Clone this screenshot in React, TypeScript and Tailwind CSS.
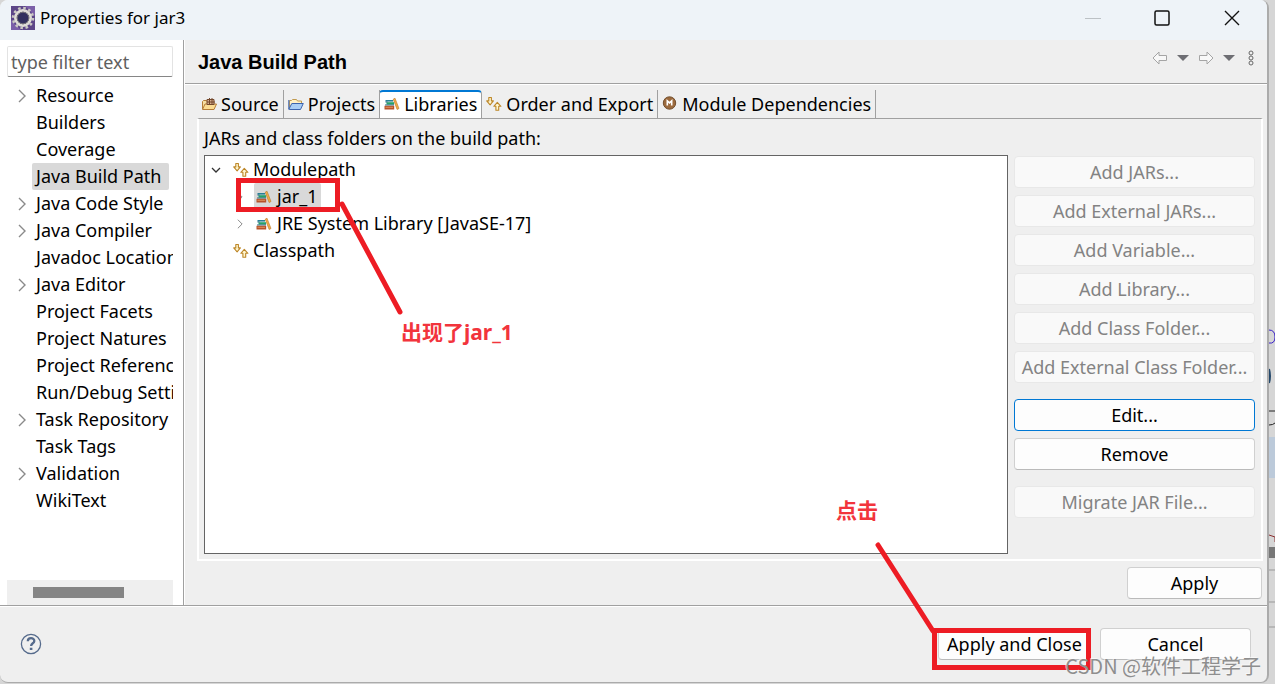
import type { ReactNode } from "react";

const categories = [
  { name: "Resource", expandable: true },
  { name: "Builders" },
  { name: "Coverage" },
  { name: "Java Build Path", selected: true },
  { name: "Java Code Style", expandable: true },
  { name: "Java Compiler", expandable: true },
  { name: "Javadoc Location" },
  { name: "Java Editor", expandable: true },
  { name: "Project Facets" },
  { name: "Project Natures" },
  { name: "Project References" },
  { name: "Run/Debug Settings" },
  { name: "Task Repository", expandable: true },
  { name: "Task Tags" },
  { name: "Validation", expandable: true },
  { name: "WikiText" },
];

function EclipseIcon() {
  return (
    <svg viewBox="0 0 24 24" className="w-6 h-6 shrink-0">
      <rect width="24" height="24" fill="#5c4688" />
      <path d="M0 24V14l10 10zM24 0v10L14 0z" fill="#7b5fa8" />
      <circle cx="12" cy="12" r="10" fill="none" stroke="#c9c7c2" strokeWidth="2.5" strokeDasharray="2.6 2.63" />
      <circle cx="12" cy="12" r="7.6" fill="#2f2c5c" stroke="#dedcd6" strokeWidth="2.8" />
      <circle cx="12" cy="12" r="5.8" fill="#33305f" stroke="#77747a" />
    </svg>
  );
}

function Chevron({ small = false }: { small?: boolean }) {
  return (
    <svg viewBox="0 0 8 14" fill="none" stroke="#8a8a8a" strokeWidth="1.4" className={small ? "w-[6px] h-[10px]" : "w-2 h-[14px]"}>
      <path d="M1 1l6 6-6 6" />
    </svg>
  );
}

function SourceIcon() {
  return (
    <svg viewBox="0 0 16 16" className="w-4 h-4 shrink-0">
      <path d="M1.5 13V5.5l1-1h3l1 1.5h6V8" fill="#f7dfa3" stroke="#b57d38" />
      <path d="M1.5 13.5L4 8h11.5l-2.5 5.5z" fill="#fbdc93" stroke="#b57d38" />
      <path d="M6 3.5h7v5H6zM6 6h8M8.5 2v6.5M11 2v6.5" fill="#d8b190" stroke="#74492d" />
    </svg>
  );
}

function ProjectsIcon() {
  return (
    <svg viewBox="0 0 16 16" className="w-4 h-4 shrink-0">
      <path d="M1.5 13V4.5h2l1-1h4l1 1.5h4V8" fill="#fff0c6" stroke="#c09a50" />
      <path d="M.8 4v9.3l3-5.8h11.5l-2.8 6H1.2" fill="#a9cdf5" stroke="#3c63ad" />
    </svg>
  );
}

function LibraryIcon() {
  return (
    <svg viewBox="0 0 16 16" className="w-4 h-4 shrink-0">
      <path d="M1.5 4h7.5v1.6H1.5z" fill="#287f96" />
      <path d="M2.5 6.2H10v2.4H2.5z" fill="#26a269" />
      <path d="M1.5 5.6h2v.8h-2zM1 8.6h9v1H1z" fill="#276a86" />
      <path d="M.5 9.8h9.7v3.7H.5z" fill="#b6522b" />
      <path d="M1.5 10.8h7.5v1H1.5z" fill="#df935d" />
      <path d="M9.2 3.2l1.8-1 4 10.3-1.9 1z" fill="#f0ad48" stroke="#bb7627" strokeWidth=".6" />
    </svg>
  );
}

function PathIcon() {
  return (
    <svg viewBox="0 0 16 16" fill="#fff6cf" stroke="#bd8729" strokeWidth="1.1" strokeLinejoin="round" className="w-4 h-4 shrink-0">
      <path d="M2.8 1.5h2.6v3.4h2L4.1 8.8.7 4.9h2.1z" />
      <path d="M9.9 14.3v-4H7.8l3.5-3.9 3.6 3.9h-2.2v4z" />
    </svg>
  );
}

function ModuleIcon() {
  return (
    <svg viewBox="0 0 16 16" className="w-4 h-4 shrink-0">
      <circle cx="7.5" cy="7" r="6.2" fill="#9c6a3d" stroke="#74502f" />
      <path d="M5.3 9.6V4.8l2.2 2 2.2-2v4.8" fill="none" stroke="#fff" strokeWidth="1.6" />
    </svg>
  );
}

function NavArrow({ flip = false }: { flip?: boolean }) {
  return (
    <svg viewBox="0 0 16 14" fill="#f8f8f8" stroke="#a5a5a5" strokeLinejoin="round" className={flip ? "w-4 h-[14px] rotate-180" : "w-4 h-[14px]"}>
      <path d="M1 7l6-6v3.5h7.5v5H7V13z" />
    </svg>
  );
}

function Caret() {
  return (
    <svg viewBox="0 0 12 6" fill="#6e6e73" className="w-3 h-[6px]">
      <path d="M0 0h12L6 6z" />
    </svg>
  );
}

function Tab({ icon, children, active = false }: { icon: ReactNode; children: ReactNode; active?: boolean }) {
  return (
    <button
      role="tab"
      aria-selected={active}
      className={
        active
          ? "flex items-center gap-1 px-1 pb-[3px] h-[29px] -mb-px -ml-px bg-white border-x border-[#a0a0a0] border-t-2 border-t-[#0078d4] rounded-t-sm whitespace-nowrap"
          : "flex items-center gap-1 px-1 h-7 border-r border-[#a0a0a0] whitespace-nowrap"
      }
    >
      {icon}
      {children}
    </button>
  );
}

function Button({ children, disabled = false, focused = false, className = "" }: { children: ReactNode; disabled?: boolean; focused?: boolean; className?: string }) {
  const tone = disabled
    ? "bg-[#f9f9f9] border-[#e8e8e8] text-[#838383]"
    : focused
      ? "bg-[#fdfdfd] border-[#0078d4]"
      : "bg-[#fdfdfd] border-[#d0d0d0] border-b-[#bababa]";
  return (
    <button disabled={disabled} className={`h-8 shrink-0 rounded border whitespace-nowrap leading-6 ${tone} ${className}`}>
      {children}
    </button>
  );
}

export default function App() {
  return (
    <div className="relative flex h-screen min-h-[640px] overflow-hidden bg-[#d6d6d6] font-['Noto_Sans','Noto_Sans_CJK_SC',sans-serif] text-[18px] leading-6 text-black">
      <div className="flex flex-col flex-1 min-w-0 mb-px bg-[#efefef] rounded-lg border-r-2 border-b border-[#ababab] overflow-hidden">
        <header className="flex items-center h-10 shrink-0 pb-1 pl-[11px] bg-[#eef3f8]">
          <EclipseIcon />
          <h1 className="pl-[5px] text-[17px]">Properties for jar3</h1>
          <div className="flex ml-auto">
            <button aria-label="Minimize" className="flex items-center justify-center w-[69px] h-9">
              <svg viewBox="0 0 16 16" stroke="#bcc1c5" className="w-4 h-4"><path d="M0 8.5h16" /></svg>
            </button>
            <button aria-label="Maximize" className="flex items-center justify-center w-[70px] h-9">
              <svg viewBox="0 0 16 16" fill="none" stroke="#111" strokeWidth="1.5" className="w-4 h-4"><rect x="1" y="1" width="14" height="14" rx="1.5" /></svg>
            </button>
            <button aria-label="Close" className="flex items-center justify-center w-[70px] h-9">
              <svg viewBox="0 0 16 16" stroke="#111" strokeWidth="1.4" className="w-4 h-4"><path d="M1 1l14 14M15 1L1 15" /></svg>
            </button>
          </div>
        </header>

        <div className="flex flex-1 min-h-0">
          <aside className="flex flex-col w-[184px] shrink-0 pt-[6px] pl-[7px] pr-[10px] bg-white border-r border-[#a0a0a0]">
            <input
              type="text"
              aria-label="Filter"
              placeholder="type filter text"
              className="w-full h-[31px] px-[3px] border border-[#e3e3e3] border-b-[#868686] rounded-xs placeholder:text-[#606060] outline-none"
            />
            <ul className="flex-1 mt-[5px] overflow-hidden">
              {categories.map((c) => (
                <li key={c.name} className="flex items-center h-[27px] whitespace-nowrap">
                  <span className="flex justify-center w-[25px] pl-1 shrink-0">{c.expandable && <Chevron />}</span>
                  <span className={c.selected ? "h-[27px] pl-1 pr-2 rounded-xs bg-[#d9d9d9] leading-[27px]" : "h-[27px] px-1 leading-[27px]"}>
                    {c.name}
                  </span>
                </li>
              ))}
            </ul>
            <div className="h-[25px] shrink-0 pt-[7px] pl-[26px] bg-[#efefef]">
              <div className="w-[91px] h-[11px] bg-[#858585]" />
            </div>
          </aside>

          <main className="flex flex-col flex-1 min-w-0 border-l border-white">
            <div className="flex items-center justify-between h-11 shrink-0 pl-[13px] pr-[13px] border-b border-[#a0a0a0]">
              <h2 className="pt-px font-['Liberation_Sans','Noto_Sans_CJK_SC',sans-serif] text-[20px] font-bold">Java Build Path</h2>
              <div className="flex items-center gap-[9px] pb-2">
                <button aria-label="Back"><NavArrow /></button>
                <button aria-label="Back history"><Caret /></button>
                <button aria-label="Forward"><NavArrow flip /></button>
                <button aria-label="Forward history"><Caret /></button>
                <button aria-label="View menu" className="pl-1">
                  <svg viewBox="0 0 6 16" fill="none" stroke="#666" className="w-[6px] h-4">
                    <circle cx="3" cy="3" r="2" />
                    <circle cx="3" cy="8" r="2" />
                    <circle cx="3" cy="13" r="2" />
                  </svg>
                </button>
              </div>
            </div>

            <div className="flex flex-col flex-1 min-h-0 pt-[5px] pl-3 pr-1 border-t border-white">
              <div role="tablist" className="flex items-end h-7 shrink-0">
                <Tab icon={<SourceIcon />}>Source</Tab>
                <Tab icon={<ProjectsIcon />}>Projects</Tab>
                <Tab icon={<LibraryIcon />} active>Libraries</Tab>
                <Tab icon={<PathIcon />}>Order and Export</Tab>
                <Tab icon={<ModuleIcon />}>Module Dependencies</Tab>
              </div>
              <div className="flex flex-col flex-1 min-h-0 pl-[5px] pr-[6px] pb-[5px] border-2 border-white border-t-[#a0a0a0] [border-top-width:1px]">
                <p className="h-9 shrink-0 pt-[7px]">JARs and class folders on the build path:</p>
                <div className="flex flex-1 min-h-0 gap-[6px]">
                  <ul className="flex-1 min-w-0 bg-white border border-[#646464] leading-[27px]">
                    <li className="flex items-center h-[27px] pl-[6px] gap-1">
                      <svg viewBox="0 0 10 6" fill="none" stroke="#333" strokeWidth="1.3" className="w-[10px] h-[6px] mr-2"><path d="M1 1l4 4 4-4" /></svg>
                      <PathIcon />
                      Modulepath
                    </li>
                    <li className="relative flex items-center h-[27px] pl-[32px] gap-[11px]">
                      <Chevron small />
                      <span className="flex items-center gap-[5px] h-[27px] pl-[2px] pr-1 bg-[#d9d9d9] rounded-xs">
                        <LibraryIcon />
                        jar_1
                      </span>
                      {/* callout over the new library entry */}
                      <div className="absolute z-10 left-[31px] -top-[5px] w-[104px] h-[34px] border-[5px] border-[#ed1c24]" />
                      <svg viewBox="0 0 66 114" className="absolute z-10 left-[134px] top-[18px] w-[66px] h-[114px]">
                        <path d="M3 3l58 108" stroke="#ed1c24" strokeWidth="5" strokeLinecap="round" />
                      </svg>
                      <strong className="absolute z-10 left-[196px] top-[135px] text-[21px] leading-7 whitespace-nowrap text-[#f2343c]">出现了jar_1</strong>
                    </li>
                    <li className="flex items-center h-[27px] pl-[32px] gap-[11px]">
                      <Chevron small />
                      <span className="flex items-center gap-[5px] pl-[2px]">
                        <LibraryIcon />
                        JRE System Library [JavaSE-17]
                      </span>
                    </li>
                    <li className="flex items-center h-[27px] pl-7 gap-1">
                      <PathIcon />
                      Classpath
                    </li>
                  </ul>
                  <div className="flex flex-col w-[241px] shrink-0 gap-[7px] pt-px">
                    <Button disabled>Add JARs...</Button>
                    <Button disabled>Add External JARs...</Button>
                    <Button disabled>Add Variable...</Button>
                    <Button disabled>Add Library...</Button>
                    <Button disabled>Add Class Folder...</Button>
                    <Button disabled>Add External Class Folder...</Button>
                    <Button focused className="mt-[9px]">Edit...</Button>
                    <Button>Remove</Button>
                    <Button disabled className="mt-[9px]">Migrate JAR File...</Button>
                  </div>
                </div>
              </div>
              <div className="flex justify-end h-11 shrink-0 pt-[6px] pr-px">
                <Button className="w-[135px]">Apply</Button>
              </div>
            </div>
          </main>
        </div>

        <footer className="flex items-center h-[77px] shrink-0 pl-5 pr-4 border-t border-[#a0a0a0] shadow-[inset_0_1px_0_#fff]">
          <button aria-label="Help">
            <svg viewBox="0 0 22 22" fill="none" stroke="#566b8c" className="w-[22px] h-[22px]">
              <circle cx="11" cy="11" r="9.6" strokeWidth="1.3" />
              <path d="M7.8 8.3c0-4.2 6.5-4 6.5-.4 0 2.4-3.2 2.3-3.2 5" strokeWidth="2.3" />
              <path d="M11.1 14.7v2.4" strokeWidth="2.6" />
            </svg>
          </button>
          <div className="flex gap-[9px] ml-auto">
            <div className="relative flex">
              <Button className="w-[153px] border-[#a3b5c9]">Apply and Close</Button>
              {/* callout over the confirm button */}
              <div className="absolute z-10 -left-[6px] top-0 w-[159px] h-[42px] border-[5px] border-[#ed1c24]" />
              <svg viewBox="0 0 62 92" className="absolute z-10 -left-[63px] -top-[86px] w-[62px] h-[92px]">
                <path d="M3 3l55 86" stroke="#ed1c24" strokeWidth="5" strokeLinecap="round" />
              </svg>
              <strong className="absolute z-10 -left-[102px] -top-[132px] text-[21px] leading-7 whitespace-nowrap text-[#f2343c]">点击</strong>
            </div>
            <Button className="w-[151px]">Cancel</Button>
          </div>
        </footer>
      </div>

      {/* sliver of the window behind the dialog */}
      <svg viewBox="0 0 6 684" fill="none" className="w-[6px] h-[684px] shrink-0">
        <path d="M0 330q6 0 6 7t-6 6" stroke="#3a22c8" />
        <path d="M0 369q2 7 0 14" stroke="#24486b" strokeWidth="2" />
        <path d="M0 411h6M0 425q4 0 6-2" stroke="#222" />
        <path d="M0 437h6v41H0z" fill="#bccada" />
        <path d="M0 535l6 2v5" stroke="#8a3030" />
        <path d="M0 547h6v11H0z" fill="#777" />
        <path d="M0 570h6M0 602h6M0 627h6" stroke="#999" />
      </svg>

      <div className="absolute z-20 right-[14px] bottom-[6px] font-['Noto_Sans_CJK_SC',sans-serif] text-[20px] whitespace-nowrap text-[#8e8e8e] [text-shadow:-1px_-1px_0_#ffffff99]">
        CSDN @软件工程学子
      </div>
    </div>
  );
}
